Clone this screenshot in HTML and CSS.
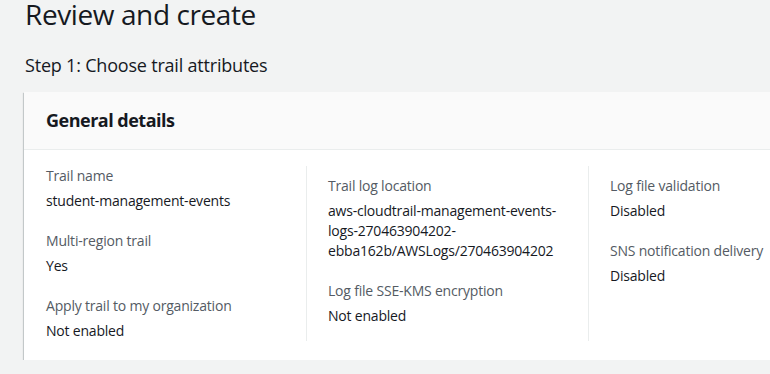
FILE: index.html
```html
<!DOCTYPE html>
<html lang="en">
<head>
    <meta charset="UTF-8">
    <meta name="viewport" content="width=device-width, initial-scale=1.0">
    <title>Review and create</title>
    <link rel="stylesheet" href="styles.css">
</head>
<body>
    <main class="page">
        <h1 class="page-title">Review and create</h1>
        <h2 class="step-title">Step 1: Choose trail attributes</h2>

        <section class="card">
            <header class="card-header">
                <h3>General details</h3>
            </header>
            <div class="card-body">
                <div class="column">
                    <div class="field">
                        <div class="field-label">Trail name</div>
                        <div class="field-value">student-management-events</div>
                    </div>
                    <div class="field">
                        <div class="field-label">Multi-region trail</div>
                        <div class="field-value">Yes</div>
                    </div>
                    <div class="field">
                        <div class="field-label">Apply trail to my organization</div>
                        <div class="field-value">Not enabled</div>
                    </div>
                </div>
                <div class="column">
                    <div class="field">
                        <div class="field-label">Trail log location</div>
                        <div class="field-value">aws-cloudtrail-management-events-logs-270463904202-ebba162b/AWSLogs/270463904202</div>
                    </div>
                    <div class="field">
                        <div class="field-label">Log file SSE-KMS encryption</div>
                        <div class="field-value">Not enabled</div>
                    </div>
                </div>
                <div class="column">
                    <div class="field">
                        <div class="field-label">Log file validation</div>
                        <div class="field-value">Disabled</div>
                    </div>
                    <div class="field">
                        <div class="field-label">SNS notification delivery</div>
                        <div class="field-value">Disabled</div>
                    </div>
                </div>
            </div>
        </section>
    </main>
</body>
</html>
```

FILE: styles.css
```css
/* General Styles */
* {
    margin: 0;
    padding: 0;
    box-sizing: border-box;
}

html, body {
    overflow: hidden;
}

body {
    font-family: 'Open Sans', 'Noto Sans', sans-serif;
    background: #f2f3f3;
    color: #16191f;
    font-size: 14px;
    line-height: 20px;
    letter-spacing: -0.2px;
}

.page {
    padding-left: 24px;
}

.page-title {
    font-size: 28px;
    line-height: 29px;
    font-weight: 400;
    letter-spacing: -0.4px;
    padding-left: 1px;
}

.step-title {
    margin-top: 25px;
    font-size: 18px;
    line-height: 22px;
    font-weight: 400;
    letter-spacing: -0.2px;
    padding-left: 1px;
}

/* Card */
.card {
    margin-top: 16px;
    width: 860px;
    background: white;
    box-shadow: 0 1px 1px 0 rgba(0, 28, 36, 0.3),
                1px 1px 1px 0 rgba(0, 28, 36, 0.15),
                -1px 1px 1px 0 rgba(0, 28, 36, 0.15);
}

.card-header {
    background: #fafafa;
    border-bottom: 1px solid #eaeded;
    padding: 17px 22px 18px;
}

.card-header h3 {
    font-size: 18px;
    line-height: 22px;
    font-weight: 700;
    letter-spacing: -0.5px;
}

.card-body {
    display: grid;
    grid-template-columns: 260px 282px 282px;
    padding: 16px 0 19px 22px;
}

.column {
    display: flex;
    flex-direction: column;
    gap: 20px;
}

.column + .column {
    border-left: 1px solid #eaeded;
    padding-left: 21px;
    padding-top: 10px;
}

.field {
    display: flex;
    flex-direction: column;
    gap: 5px;
}

.field-label {
    color: #545b64;
}

.field-value {
    padding-right: 20px;
}
```
